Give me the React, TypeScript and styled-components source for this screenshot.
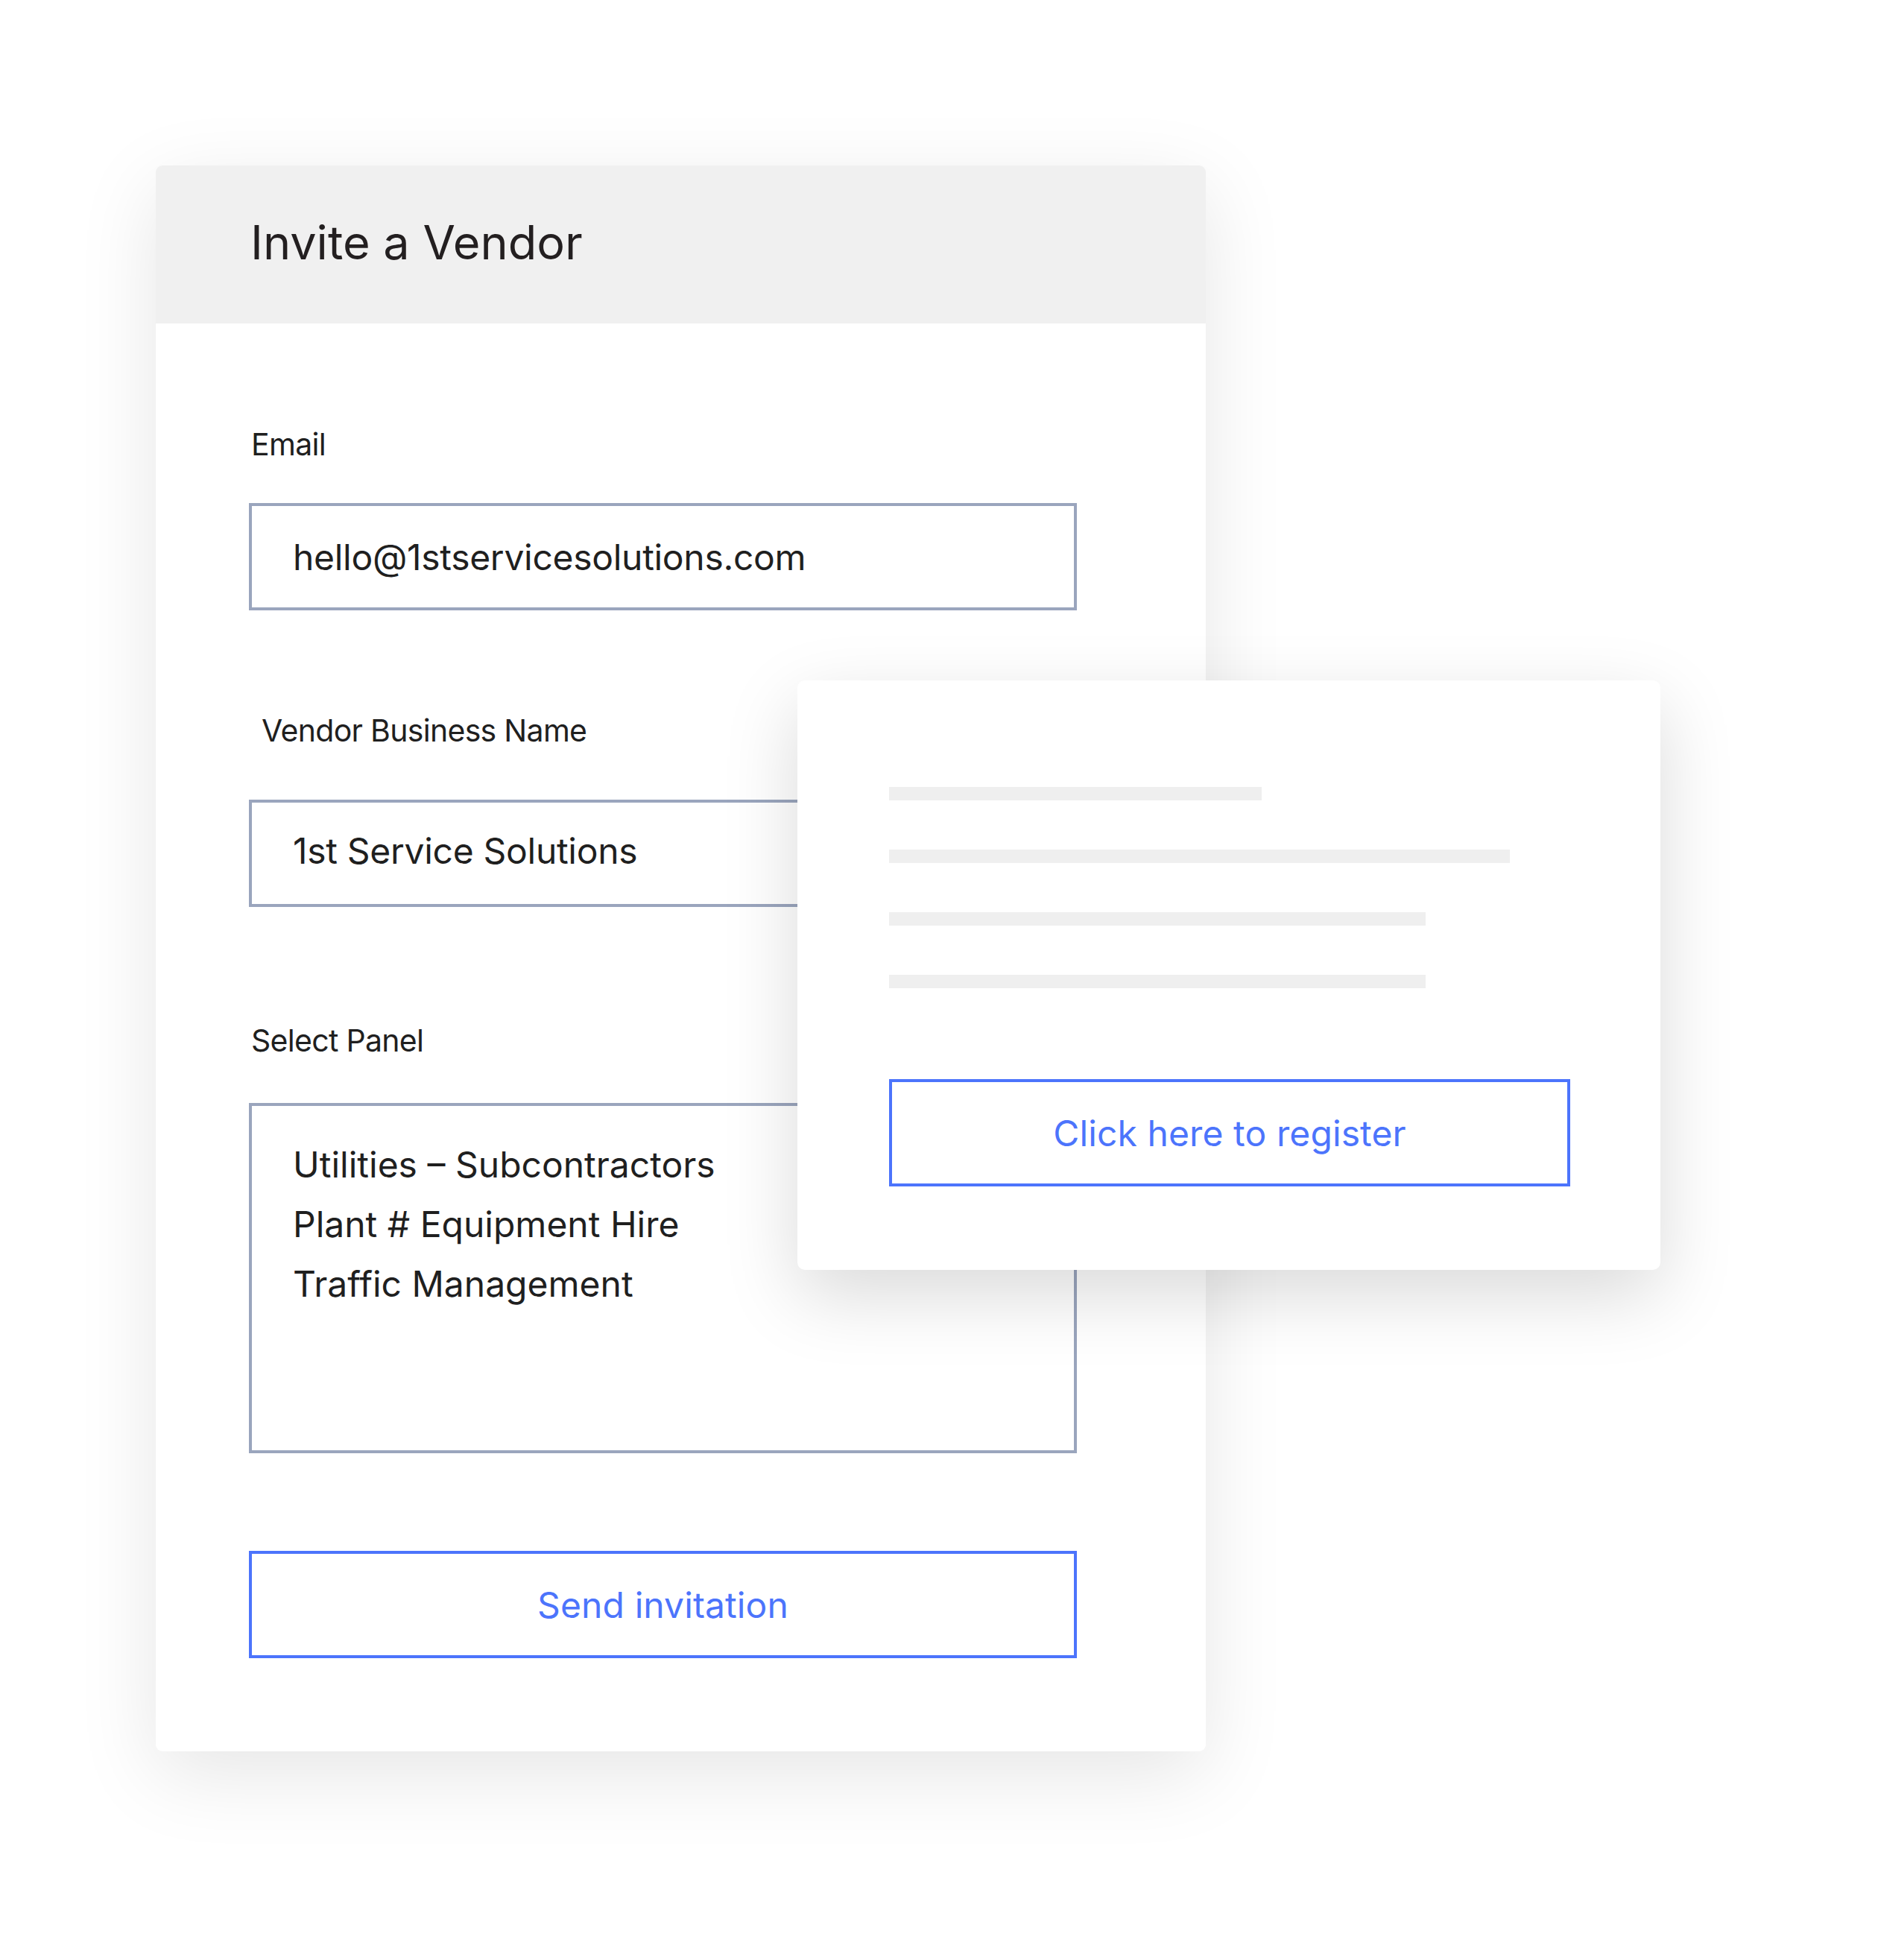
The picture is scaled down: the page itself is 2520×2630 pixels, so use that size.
import React from 'react'
import styled, { createGlobalStyle } from 'styled-components'

const GlobalStyle = createGlobalStyle`
  html, body {
    margin: 0;
    padding: 0;
    background: #ffffff;
  }

  body {
    font-family: Inter, "Liberation Sans", Arial, sans-serif;
    color: #231f20;
  }

  * {
    box-sizing: border-box;
  }
`

const Canvas = styled.div`
  position: relative;
  width: 2520px;
  height: 2630px;
  padding: 222px 0 0 209px;
  overflow: hidden;
`

const Card = styled.section`
  width: 1409px;
  height: 2128px;
  background: #ffffff;
  border-radius: 9px;
  overflow: hidden;
  box-shadow: 0 30px 110px rgba(0, 0, 0, 0.1);
`

const Header = styled.header`
  height: 212px;
  background: #f0f0f0;
  display: flex;
  align-items: center;
  padding: 0 0 6px 127px;
`

const Title = styled.h1`
  margin: 0;
  font-size: 63px;
  font-weight: 400;
  letter-spacing: 0;
  color: #231f20;
`

const Body = styled.div`
  display: flex;
  flex-direction: column;
  padding: 142px 0 0 125px;
`

const Label = styled.label<{ $gap: number; $below: number; $indent?: number }>`
  display: block;
  margin-top: ${({ $gap }) => $gap}px;
  margin-bottom: ${({ $below }) => $below}px;
  padding-left: ${({ $indent }) => $indent ?? 3}px;
  font-size: 41px;
  line-height: 41px;
  letter-spacing: -0.7px;
  color: #1f1f1f;
`

const Field = styled.div<{ $lift?: number }>`
  width: 1111px;
  height: 144px;
  border: 4px solid #9aa5bd;
  display: flex;
  align-items: center;
  padding: 0 0 ${({ $lift }) => $lift ?? 0}px 55px;
  font-size: 48px;
  letter-spacing: -0.3px;
  color: #1f1f1f;
`

const PanelBox = styled.div`
  width: 1111px;
  height: 470px;
  border: 4px solid #9aa5bd;
  padding: 39px 55px;
  font-size: 48px;
  line-height: 80px;
  letter-spacing: 0;
  color: #1f1f1f;
`

const PanelOption = styled.div`
  white-space: nowrap;
`

const OutlineButton = styled.button<{ $width: number; $top: number }>`
  width: ${({ $width }) => $width}px;
  height: 144px;
  margin-top: ${({ $top }) => $top}px;
  border: 4px solid #4c74fc;
  border-radius: 0;
  background: #ffffff;
  color: #4c74fc;
  font-family: inherit;
  font-size: 48px;
  letter-spacing: 0.1px;
  display: flex;
  align-items: center;
  justify-content: center;
  cursor: pointer;
`

const Popup = styled.div`
  position: absolute;
  left: 1070px;
  top: 913px;
  width: 1158px;
  height: 791px;
  background: #ffffff;
  border-radius: 10px;
  box-shadow: 0 34px 100px rgba(0, 0, 0, 0.15);
  padding: 143px 0 0 123px;
  display: flex;
  flex-direction: column;
`

const SkeletonList = styled.div`
  display: flex;
  flex-direction: column;
  gap: 66px;
`

const SkeletonBar = styled.div<{ $width: number }>`
  width: ${({ $width }) => $width}px;
  height: 18px;
  background: #efefef;
`

const panels = ['Utilities – Subcontractors', 'Plant # Equipment Hire', 'Traffic Management']

const App = () => {
  return (
    <>
      <GlobalStyle />
      <Canvas>
        <Card>
          <Header>
            <Title>Invite a Vendor</Title>
          </Header>

          <Body>
            <Label $gap={0} $below={58}>Email</Label>
            <Field>hello@1stservicesolutions.com</Field>

            <Label $gap={141} $below={72} $indent={17}>Vendor Business Name</Label>
            <Field $lift={8}>1st Service Solutions</Field>

            <Label $gap={159} $below={63}>Select Panel</Label>
            <PanelBox>
              {panels.map(p => (
                <PanelOption key={p}>{p}</PanelOption>
              ))}
            </PanelBox>

            <OutlineButton $width={1111} $top={131}>Send invitation</OutlineButton>
          </Body>
        </Card>

        <Popup>
          <SkeletonList>
            <SkeletonBar $width={500} />
            <SkeletonBar $width={833} />
            <SkeletonBar $width={720} />
            <SkeletonBar $width={720} />
          </SkeletonList>
          <OutlineButton $width={914} $top={122}>Click here to register</OutlineButton>
        </Popup>
      </Canvas>
    </>
  )
}

export default App
